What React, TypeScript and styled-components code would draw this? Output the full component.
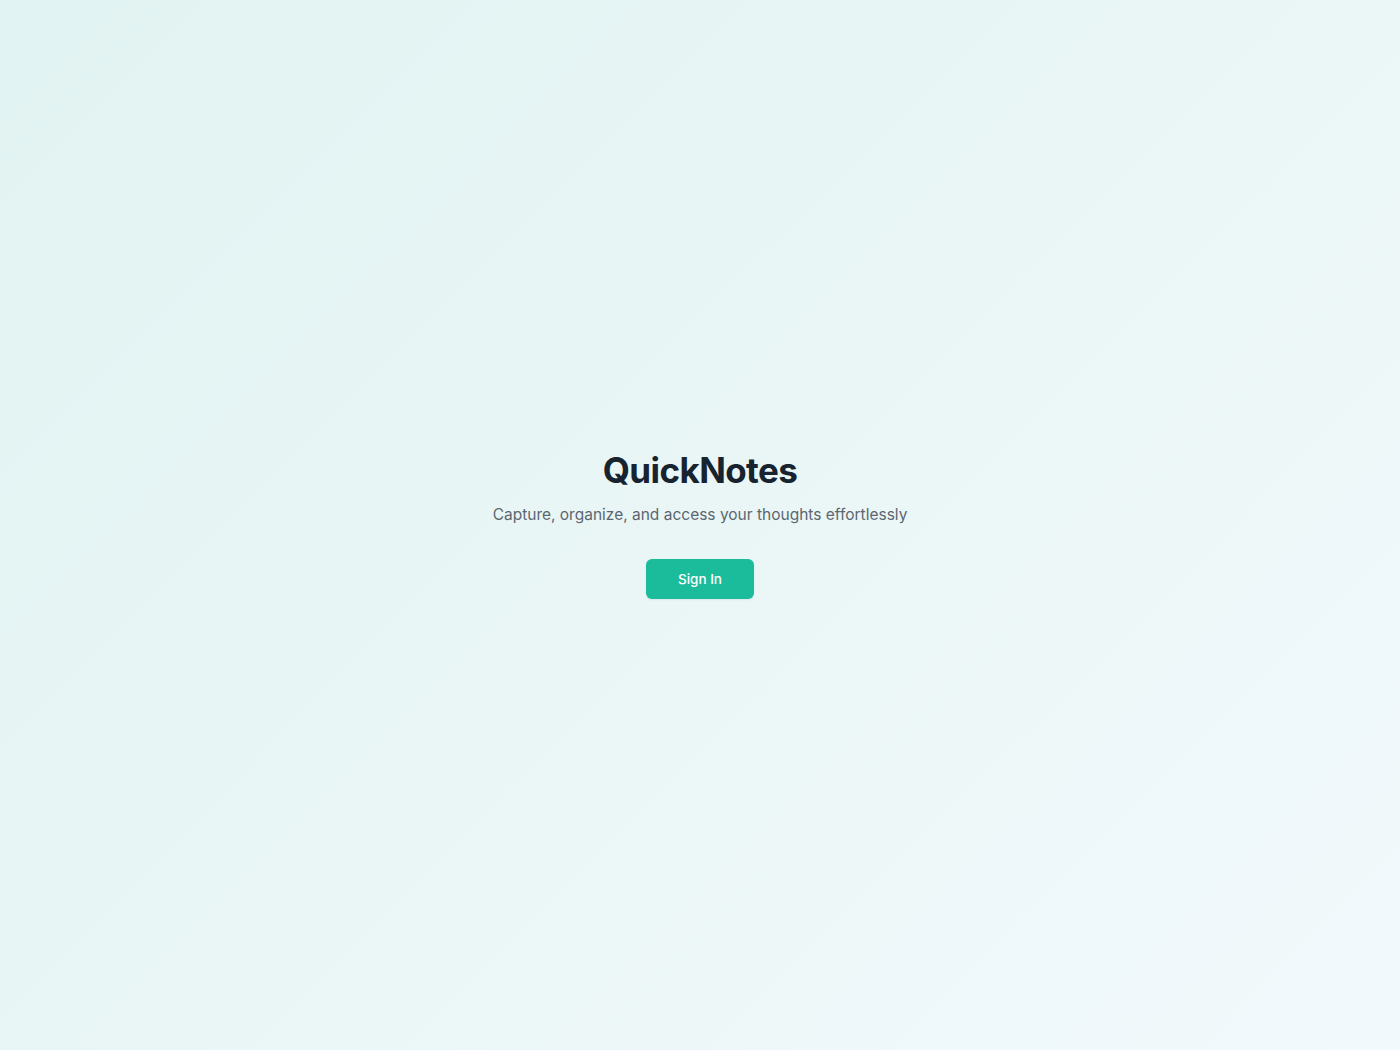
import * as React from 'react';
import { createGlobalStyle, default as styled } from 'styled-components';

const GlobalStyle = createGlobalStyle`
  html, body {
    margin: 0;
    padding: 0;
  }
  body {
    font-family: Inter, "Noto Sans", sans-serif;
    -webkit-font-smoothing: antialiased;
  }
`;

const Page = styled.main`
  min-height: 100vh;
  box-sizing: border-box;
  padding-bottom: 2px;
  display: flex;
  align-items: center;
  justify-content: center;
  background: linear-gradient(135deg, #e1f3f2 0%, #eaf6f6 50%, #f2f9fc 100%);
`;

const Hero = styled.section`
  display: flex;
  flex-direction: column;
  align-items: center;
  text-align: center;
`;

const Title = styled.h1`
  margin: 0;
  font-size: 35px;
  line-height: 40px;
  font-weight: 700;
  letter-spacing: -0.6px;
  color: #17232f;
`;

const Tagline = styled.p`
  margin: 13px 0 0;
  font-size: 15.5px;
  line-height: 24px;
  color: #5b6670;
`;

const SignInButton = styled.button`
  margin-top: 32px;
  width: 108px;
  height: 40px;
  border: none;
  border-radius: 6px;
  background: #1abc9c;
  color: #ffffff;
  font-family: inherit;
  font-size: 13.5px;
  font-weight: 500;
  cursor: pointer;
  box-shadow: 0 1px 2px rgba(16, 80, 70, 0.08);

  &:hover {
    background: #17a98c;
  }
`;

const App: React.FunctionComponent = () => (
  <React.Fragment>
    <GlobalStyle />
    <Page>
      <Hero>
        <Title>QuickNotes</Title>
        <Tagline>Capture, organize, and access your thoughts effortlessly</Tagline>
        <SignInButton>Sign In</SignInButton>
      </Hero>
    </Page>
  </React.Fragment>
);

export default App;
